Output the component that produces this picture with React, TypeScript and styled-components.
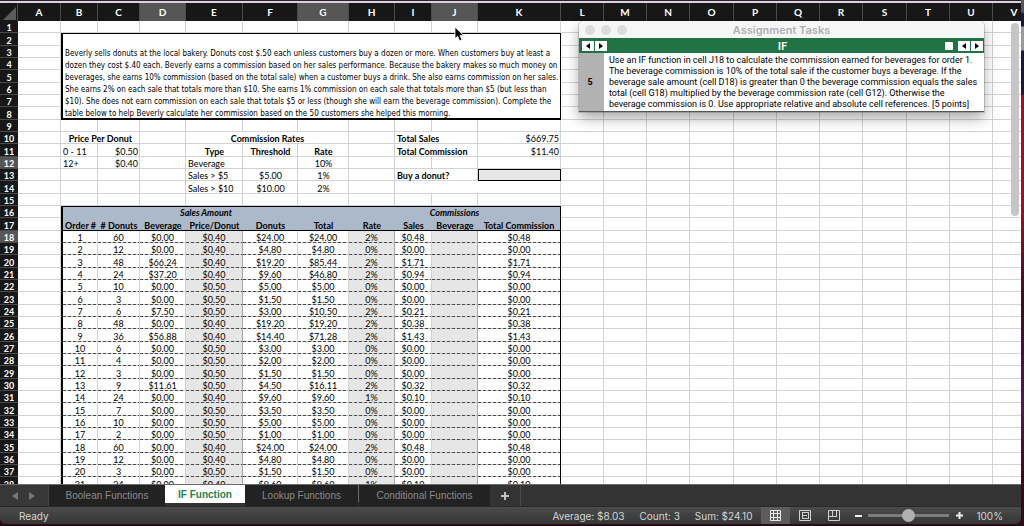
import React from "react";
import styled, { createGlobalStyle, css } from "styled-components";

const GlobalStyle = createGlobalStyle`
  * { box-sizing: border-box; }
  html, body, #root { height: 100%; }
  body { margin: 0; background: #2b0a16; overflow: hidden; }
  button, input { font: inherit; }
`;

const SHEET_FONT = '"Lato", "Liberation Sans", sans-serif';
const UI_FONT = '"Inter", "Liberation Sans", sans-serif';
const GRID = "#d2d2d2";

const Desktop = styled.div`
  height: 100%;
  padding: 0 3px 2px 0;
  background: linear-gradient(180deg, #55555c 0 12px, #16163f 14px 26px, #9a9a9e 27px 50px, #17173f 51px 94px, #a5121e 95px 200px, #3a0d22 300px, #5a1750 410px, #3a0a18 480px, #2b0a16);
`;

const Window = styled.div`
  display: flex;
  flex-direction: column;
  height: 100%;
  overflow: hidden;
  border-radius: 0 0 6px 6px;
  background: #171717;
  border-top: 1px solid #2a2429;
`;

const SheetArea = styled.main`
  position: relative;
  flex: 1;
  min-height: 0;
  overflow: hidden;
  background: #fff;
  border-top: 2px solid #d9d2da;
`;

const Grid = styled.table`
  width: 100%;
  min-width: 1036px;
  table-layout: fixed;
  border-collapse: separate;
  border-spacing: 0;
  font-family: ${SHEET_FONT};
  font-size: 9px;
  line-height: 11px;
  color: #000;

  td, th { padding: 0; white-space: nowrap; }
`;

const Col = styled.col<{ $w?: number }>`
  ${(p) => p.$w && `width: ${p.$w}px;`}
`;

const Row = styled.tr`
  height: 12px;
  &:nth-child(3n + 2) { height: 13px; }
`;

const ColHead = styled.th<{ $on?: boolean }>`
  height: 18px;
  font-size: 10px;
  color: #fff;
  background: ${(p) => (p.$on ? "#565656" : "#171717")};
  border-right: 1px solid #4a4a4a;
`;

const Corner = styled.td`
  height: 18px;
  background: #171717;
  border-right: 1px solid #4a4a4a;
  svg { display: block; margin: 2px 1px 0 3px; }
`;

const RowHead = styled.th<{ $on?: boolean }>`
  color: #fff;
  background: ${(p) => (p.$on ? "#565656" : "#171717")};
  box-shadow: inset 0 -1px 0 #4a4a4a;
  && { padding-top: 1px; }
`;

type Look = "plain" | "note" | "answer" | "band" | "bandLabel" | "data" | "shade";

const looks = {
  plain: css`
    box-shadow: inset -1px -1px 0 ${GRID};
  `,
  note: css`
    border: 2px solid #000;
    border-top-width: 1px;
    border-right-width: 1px;
  `,
  answer: css`
    background: #e6e6e6;
    box-shadow: inset 0 0 0 1px #000;
  `,
  band: css`
    background: #acb9ca;
    box-shadow: inset 0 1px 0 #000;
  `,
  bandLabel: css`
    background: #acb9ca;
    box-shadow: inset 0 -1px 0 #000;
  `,
  data: css`
    border-right: 1px solid ${GRID};
    background: repeating-linear-gradient(90deg, #4a4a4a 0 3px, #c8c8c8 3px 5px) bottom / 100% 1px no-repeat;
  `,
  shade: css`
    border-right: 1px solid #a6a6a6;
    background: repeating-linear-gradient(90deg, #4a4a4a 0 3px, #c8c8c8 3px 5px) bottom / 100% 1px no-repeat #e6e6e6;
  `,
};

const Cell = styled.td<{ $look?: Look; $align?: string; $bold?: boolean; $italic?: boolean; $edge?: "left" | "right" }>`
  ${(p) => looks[p.$look ?? "plain"]}
  text-align: ${(p) => p.$align ?? "center"};
  font-weight: ${(p) => (p.$bold ? 700 : 400)};
  font-style: ${(p) => (p.$italic ? "italic" : "normal")};
  ${(p) => p.$edge === "left" && "border-left: 2px solid #000;"}
  ${(p) => p.$edge === "right" && "border-right: 1px solid #000;"}
  && { padding: 1px 2px 0; }
`;

const Story = styled.p`
  margin: 12px 0 -2px;
  font-family: "DejaVu Sans Condensed", ${SHEET_FONT};
  font-size: 8px;
  line-height: 12px;
  span { display: block; }
`;

const Thumb = styled.div`
  position: absolute;
  top: 20px;
  right: 2px;
  width: 8px;
  height: 193px;
  border-radius: 4px;
  background: #c6c6c6;
`;

const Pointer = styled.svg`
  position: absolute;
  left: 454px;
  top: 23px;
`;

const Panel = styled.section`
  position: absolute;
  left: 579px;
  top: 18px;
  width: 405px;
  border-radius: 5px 5px 0 0;
  overflow: hidden;
  background: #fff;
  box-shadow: 0 0 0 1px rgba(0, 0, 0, 0.15), 0 6px 14px rgba(0, 0, 0, 0.35);
`;

const PanelTitle = styled.header`
  display: grid;
  grid-template-columns: 1fr auto 1fr;
  align-items: center;
  height: 17px;
  padding: 0 6px;
  background: #f6f6f6;
  font-family: ${UI_FONT};
  font-size: 11px;
  font-weight: 600;
  color: #b0b0b0;
`;

const Lights = styled.div`
  display: flex;
  gap: 6px;
  i { width: 10px; height: 10px; border-radius: 50%; background: #dcdcdc; }
`;

const PanelBar = styled.div`
  display: grid;
  grid-template-columns: 1fr auto 1fr;
  align-items: center;
  height: 15px;
  padding: 0 1px 0 3px;
  background: #217346;
  color: #fff;
  font: 700 11px ${SHEET_FONT};
`;

const Steps = styled.div<{ $end?: boolean }>`
  display: flex;
  align-items: center;
  gap: 1px;
  justify-content: ${(p) => (p.$end ? "flex-end" : "flex-start")};
`;

const StepButton = styled.button`
  display: flex;
  align-items: center;
  justify-content: center;
  width: 12px;
  height: 10px;
  padding: 0;
  border: 0;
  background: #fff;
`;

const DoneBox = styled.input`
  appearance: none;
  width: 8px;
  height: 8px;
  margin: 0 4px 0 0;
  border-radius: 1px;
  background: #fff;
`;

const PanelBody = styled.div`
  display: flex;
  border-bottom: 1px solid #555;
  font-family: "Roboto", "Liberation Sans", sans-serif;
  font-size: 9px;
  line-height: 11px;
  color: #000;
`;

const TaskNumber = styled.strong`
  display: flex;
  flex: none;
  align-items: center;
  justify-content: center;
  width: 25px;
  padding-right: 3px;
  background: #b2b2b2;
`;

const TaskText = styled.p`
  margin: 0;
  padding: 2px 0 1px 5px;
  white-space: nowrap;
  span { display: block; }
`;

const TabBar = styled.nav`
  display: flex;
  height: 22px;
  flex: none;
  background: #333;
  border-top: 1px solid #6a6a6a;
  font-family: "Liberation Sans", sans-serif;
  font-size: 10px;
`;

const TabArrows = styled.div`
  display: flex;
  align-items: center;
  justify-content: space-between;
  width: 49px;
  padding: 0 13px 0 12px;
  background: #383838;
  border-right: 1px solid #444;
`;

const TabArrow = styled.button`
  display: flex;
  padding: 0;
  border: 0;
  background: none;
`;

const Tab = styled.button<{ $active?: boolean; $w: number }>`
  width: ${(p) => p.$w}px;
  height: ${(p) => (p.$active ? 18 : 21)}px;
  padding: 0;
  border: 0;
  line-height: 19px;
  white-space: nowrap;
  color: ${(p) => (p.$active ? "#22834f" : "#8a8a8a")};
  background: ${(p) => (p.$active ? "#fff" : "#222")};
  font-weight: ${(p) => (p.$active ? 700 : 400)};
`;

const TabRule = styled.i`
  width: 1px;
  height: 17px;
  background: #6a6a6a;
`;

const AddTab = styled.button`
  display: flex;
  align-items: center;
  justify-content: center;
  width: 31px;
  padding: 0;
  border: 0;
  background: #333;
  border-right: 1px solid #4a4a4a;
`;

const StatusBar = styled.footer`
  display: flex;
  align-items: center;
  flex: none;
  height: 18px;
  padding: 0 18px 0 19px;
  background: linear-gradient(#4b4b4b, #363636);
  border-top: 1px solid #2a2a2a;
  font-family: ${UI_FONT};
  font-size: 10px;
  color: #d6d6d6;
  white-space: nowrap;
`;

const Stats = styled.div`
  display: flex;
  gap: 15px;
  margin-left: auto;
  margin-right: 9px;
`;

const ViewButton = styled.button<{ $on?: boolean }>`
  display: flex;
  align-items: center;
  justify-content: center;
  width: 29px;
  height: 17px;
  padding: 0;
  border: 0;
  background: ${(p) => (p.$on ? "#5c5c5c" : "transparent")};
`;

const ZoomButton = styled.button`
  display: flex;
  align-items: center;
  justify-content: center;
  width: 8px;
  height: 17px;
  padding: 0;
  border: 0;
  background: none;
`;

const ZoomGroup = styled.div`
  display: flex;
  align-items: center;
  gap: 6px;
  margin-left: 6px;
`;

const Zoom = styled.input`
  appearance: none;
  width: 81px;
  height: 13px;
  margin: 0;
  background: transparent;
  &::-webkit-slider-runnable-track { height: 3px; background: #7c7c7c; }
  &::-webkit-slider-thumb {
    appearance: none;
    width: 13px;
    height: 13px;
    margin-top: -5px;
    border-radius: 50%;
    background: #b0b0b0;
  }
`;

const ZoomValue = styled.output`
  margin-left: 13px;
`;

const columns: [string, number?][] = [
  ["A", 43], ["B", 37], ["C", 42], ["D", 46], ["E", 57], ["F", 55], ["G", 51], ["H", 46], ["I", 37], ["J", 46], ["K", 83],
  ["L", 43], ["M", 43], ["N", 43], ["O", 44], ["P", 43], ["Q", 43], ["R", 43], ["S", 44], ["T", 43], ["U", 43], ["V"],
];

const orders = [
  ["1", "60", "$0.00", "$0.40", "$24.00", "$24.00", "2%", "$0.48"],
  ["2", "12", "$0.00", "$0.40", "$4.80", "$4.80", "0%", "$0.00"],
  ["3", "48", "$66.24", "$0.40", "$19.20", "$85.44", "2%", "$1.71"],
  ["4", "24", "$37.20", "$0.40", "$9.60", "$46.80", "2%", "$0.94"],
  ["5", "10", "$0.00", "$0.50", "$5.00", "$5.00", "0%", "$0.00"],
  ["6", "3", "$0.00", "$0.50", "$1.50", "$1.50", "0%", "$0.00"],
  ["7", "6", "$7.50", "$0.50", "$3.00", "$10.50", "2%", "$0.21"],
  ["8", "48", "$0.00", "$0.40", "$19.20", "$19.20", "2%", "$0.38"],
  ["9", "36", "$56.88", "$0.40", "$14.40", "$71.28", "2%", "$1.43"],
  ["10", "6", "$0.00", "$0.50", "$3.00", "$3.00", "0%", "$0.00"],
  ["11", "4", "$0.00", "$0.50", "$2.00", "$2.00", "0%", "$0.00"],
  ["12", "3", "$0.00", "$0.50", "$1.50", "$1.50", "0%", "$0.00"],
  ["13", "9", "$11.61", "$0.50", "$4.50", "$16.11", "2%", "$0.32"],
  ["14", "24", "$0.00", "$0.40", "$9.60", "$9.60", "1%", "$0.10"],
  ["15", "7", "$0.00", "$0.50", "$3.50", "$3.50", "0%", "$0.00"],
  ["16", "10", "$0.00", "$0.50", "$5.00", "$5.00", "0%", "$0.00"],
  ["17", "2", "$0.00", "$0.50", "$1.00", "$1.00", "0%", "$0.00"],
  ["18", "60", "$0.00", "$0.40", "$24.00", "$24.00", "2%", "$0.48"],
  ["19", "12", "$0.00", "$0.40", "$4.80", "$4.80", "0%", "$0.00"],
  ["20", "3", "$0.00", "$0.50", "$1.50", "$1.50", "0%", "$0.00"],
  ["21", "24", "$0.00", "$0.40", "$9.60", "$9.60", "1%", "$0.10"],
];

const Empty = ({ n }: { n: number }) => (
  <>{Array.from({ length: n }, (_, i) => <Cell key={i} />)}</>
);

const Line = ({ n, children }: { n: number; children?: React.ReactNode }) => (
  <Row>
    <RowHead scope="row" $on={n === 12 || n === 18}>{n}</RowHead>
    <Cell />
    {children}
    <Empty n={11} />
  </Row>
);

const Triangle = ({ dir, w, h, fill }: { dir: "left" | "right"; w: number; h: number; fill: string }) => (
  <svg width={w} height={h} aria-hidden="true">
    <path d={dir === "left" ? `M${w} 0V${h}L0 ${h / 2}Z` : `M0 0V${h}L${w} ${h / 2}Z`} fill={fill} />
  </svg>
);

const StepPair = () => (
  <>
    <StepButton aria-label="Previous"><Triangle dir="left" w={4} h={6} fill="#000" /></StepButton>
    <StepButton aria-label="Next"><Triangle dir="right" w={4} h={6} fill="#000" /></StepButton>
  </>
);

const Sheet = () => (
  <Grid>
    <colgroup>
      <Col $w={18} />
      {columns.map(([name, w]) => <Col key={name} $w={w} />)}
    </colgroup>
    <thead>
      <tr>
        <Corner>
          <svg width="13" height="13" aria-hidden="true"><path d="M13 0V13H0Z" fill="#5c5c5c" /></svg>
        </Corner>
        {columns.map(([name]) => (
          <ColHead key={name} scope="col" $on={"DGJ".includes(name)}>{name}</ColHead>
        ))}
      </tr>
    </thead>
    <tbody>
      <Line n={1}><Empty n={10} /></Line>
      <Line n={2}>
        <Cell $look="note" $align="left" rowSpan={7} colSpan={10}>
          <Story>
            <span>Beverly sells donuts at the local bakery. Donuts cost $.50 each unless customers buy a dozen or more. When customers buy at least a</span>
            <span>dozen they cost $.40 each. Beverly earns a commission based on her sales performance. Because the bakery makes so much money on</span>
            <span>beverages, she earns 10% commission (based on the total sale) when a customer buys a drink. She also earns commission on her sales.</span>
            <span>She earns 2% on each sale that totals more than $10. She earns 1% commission on each sale that totals more than $5 (but less than</span>
            <span>$10). She does not earn commission on each sale that totals $5 or less (though she will earn the beverage commission). Complete the</span>
            <span>table below to help Beverly calculate her commission based on the 50 customers she helped this morning.</span>
          </Story>
        </Cell>
      </Line>
      {[3, 4, 5, 6, 7, 8].map((n) => <Line key={n} n={n} />)}
      <Line n={9}><Empty n={10} /></Line>
      <Line n={10}>
        <Cell $bold colSpan={2}>Price Per Donut</Cell>
        <Cell />
        <Cell $bold colSpan={3}>Commission Rates</Cell>
        <Cell />
        <Cell $bold $align="left" colSpan={2}>Total Sales</Cell>
        <Cell $align="right">$669.75</Cell>
      </Line>
      <Line n={11}>
        <Cell $align="left">0 - 11</Cell>
        <Cell $align="right">$0.50</Cell>
        <Cell />
        <Cell $bold>Type</Cell>
        <Cell $bold>Threshold</Cell>
        <Cell $bold>Rate</Cell>
        <Cell />
        <Cell $bold $align="left" colSpan={2}>Total Commission</Cell>
        <Cell $align="right">$11.40</Cell>
      </Line>
      <Line n={12}>
        <Cell $align="left">12+</Cell>
        <Cell $align="right">$0.40</Cell>
        <Cell />
        <Cell $align="left">Beverage</Cell>
        <Cell />
        <Cell>10%</Cell>
        <Empty n={4} />
      </Line>
      <Line n={13}>
        <Empty n={3} />
        <Cell $align="left">Sales &gt; $5</Cell>
        <Cell>$5.00</Cell>
        <Cell>1%</Cell>
        <Cell />
        <Cell $bold $align="left" colSpan={2}>Buy a donut?</Cell>
        <Cell $look="answer" />
      </Line>
      <Line n={14}>
        <Empty n={3} />
        <Cell $align="left">Sales &gt; $10</Cell>
        <Cell>$10.00</Cell>
        <Cell>2%</Cell>
        <Cell />
        <Cell colSpan={3} />
      </Line>
      <Line n={15}><Empty n={10} /></Line>
      <Line n={16}>
        <Cell $look="band" $edge="left" $bold $italic colSpan={6}>Sales Amount</Cell>
        <Cell $look="band" $edge="right" $bold $italic colSpan={4}>Commissions</Cell>
      </Line>
      <Line n={17}>
        <Cell $look="bandLabel" $edge="left" $bold>Order #</Cell>
        {["# Donuts", "Beverage", "Price/Donut", "Donuts", "Total", "Rate", "Sales", "Beverage"].map((t, i) => (
          <Cell key={i} $look="bandLabel" $bold>{t}</Cell>
        ))}
        <Cell $look="bandLabel" $edge="right" $bold>Total Commission</Cell>
      </Line>
      {orders.map(([id, qty, bev, price, donuts, total, rate, sales], i) => (
        <Line key={id} n={18 + i}>
          <Cell $look="data" $edge="left">{id}</Cell>
          <Cell $look="data">{qty}</Cell>
          <Cell $look="data">{bev}</Cell>
          <Cell $look="shade">{price}</Cell>
          <Cell $look="data">{donuts}</Cell>
          <Cell $look="data">{total}</Cell>
          <Cell $look="shade">{rate}</Cell>
          <Cell $look="data">{sales}</Cell>
          <Cell $look="shade" />
          <Cell $look="data" $edge="right">{sales}</Cell>
        </Line>
      ))}
    </tbody>
  </Grid>
);

const TaskPanel = () => (
  <Panel>
    <PanelTitle>
      <Lights><i /><i /><i /></Lights>
      <span>Assignment Tasks</span>
    </PanelTitle>
    <PanelBar>
      <Steps><StepPair /></Steps>
      <span>IF</span>
      <Steps $end>
        <DoneBox type="checkbox" aria-label="Task done" />
        <StepPair />
      </Steps>
    </PanelBar>
    <PanelBody>
      <TaskNumber>5</TaskNumber>
      <TaskText>
        <span>Use an IF function in cell J18 to calculate the commission earned for beverages for order 1.</span>
        <span>The beverage commission is 10% of the total sale if the customer buys a beverage. If the</span>
        <span>beverage sale amount (cell D18) is greater than 0 the beverage commission equals the sales</span>
        <span>total (cell G18) multiplied by the beverage commission rate (cell G12). Otherwise the</span>
        <span>beverage commission is 0. Use appropriate relative and absolute cell references. [5 points]</span>
      </TaskText>
    </PanelBody>
  </Panel>
);

export default function App() {
  return (
    <Desktop>
      <GlobalStyle />
      <Window>
        <SheetArea>
          <Sheet />
          <Thumb />
          <TaskPanel />
          <Pointer width="12" height="17" viewBox="0 0 12 17" aria-hidden="true">
            <path d="M1 1V12.5L3.6 10.2L5.6 14.8L7.9 13.8L6 9.4H9.6Z" fill="#000" stroke="#fff" strokeWidth="0.8" />
          </Pointer>
        </SheetArea>
        <TabBar>
          <TabArrows>
            <TabArrow aria-label="Scroll tabs left"><Triangle dir="left" w={6} h={8} fill="#777" /></TabArrow>
            <TabArrow aria-label="Scroll tabs right"><Triangle dir="right" w={6} h={8} fill="#777" /></TabArrow>
          </TabArrows>
          <Tab $w={116}>Boolean Functions</Tab>
          <Tab $w={80} $active>IF Function</Tab>
          <Tab $w={113}>Lookup Functions</Tab>
          <TabRule />
          <Tab $w={131}>Conditional Functions</Tab>
          <AddTab aria-label="Add sheet">
            <svg width="8" height="8" aria-hidden="true"><path d="M4 0V8M0 4H8" stroke="#c4c4c4" strokeWidth="2" /></svg>
          </AddTab>
        </TabBar>
        <StatusBar>
          <span>Ready</span>
          <Stats>
            <span>Average: $8.03</span>
            <span>Count: 3</span>
            <span>Sum: $24.10</span>
          </Stats>
          <ViewButton $on aria-label="Normal view">
            <svg width="11" height="11" fill="none" stroke="#e8e8e8" aria-hidden="true">
              <path d="M0.5 0.5H10.5V10.5H0.5ZM3.5 0V11M7.5 0V11M0 3.5H11M0 7.5H11" />
            </svg>
          </ViewButton>
          <ViewButton aria-label="Page layout">
            <svg width="12" height="11" fill="none" stroke="#d0d0d0" aria-hidden="true">
              <path d="M0.5 0.5H11.5V10.5H0.5ZM3.5 2V9M3 2.5H9M3 5.5H8M3 8.5H9M9.5 2V9" />
            </svg>
          </ViewButton>
          <ViewButton aria-label="Page break preview">
            <svg width="12" height="11" fill="none" stroke="#d0d0d0" aria-hidden="true">
              <path d="M0.5 0.5H11.5V10.5H0.5ZM4.5 0V6.5M8.5 0V6.5M0 6.5H9" />
            </svg>
          </ViewButton>
          <ZoomGroup>
            <ZoomButton aria-label="Zoom out">
              <svg width="7" height="2" aria-hidden="true"><path d="M0 1H7" stroke="#eee" strokeWidth="2" /></svg>
            </ZoomButton>
            <Zoom type="range" aria-label="Zoom" min={0} max={200} defaultValue={100} />
            <ZoomButton aria-label="Zoom in">
              <svg width="7" height="7" aria-hidden="true"><path d="M0 3.5H7M3.5 0V7" stroke="#eee" strokeWidth="2" /></svg>
            </ZoomButton>
          </ZoomGroup>
          <ZoomValue>100%</ZoomValue>
        </StatusBar>
      </Window>
    </Desktop>
  );
}
